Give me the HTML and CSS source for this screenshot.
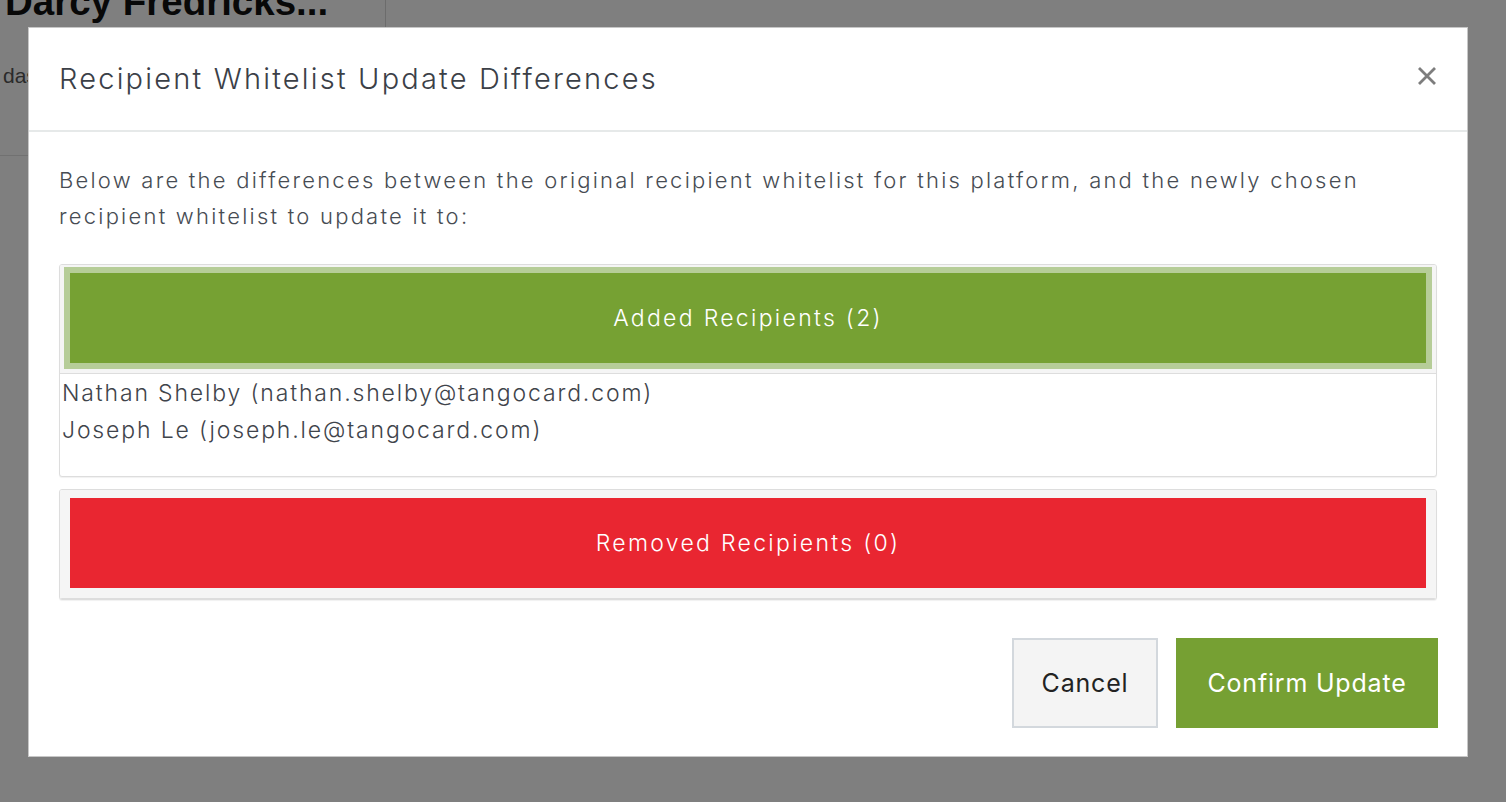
FILE: index.html
```html
<!DOCTYPE html>
<html lang="en">
<head>
<meta charset="utf-8">
<title>Recipient Whitelist Update Differences</title>
<link rel="stylesheet" href="styles.css">
</head>
<body>
<div class="page">
  <div class="side-card">
    <h1 class="side-title">Darcy Fredricks...</h1>
    <p class="side-text">dashboard</p>
  </div>
</div>
<div class="overlay"></div>
<div class="modal" role="dialog">
  <div class="modal-header">
    <h2 class="modal-title">Recipient Whitelist Update Differences</h2>
    <button class="close" aria-label="Close">
      <svg width="20" height="20" viewBox="0 0 20 20"><path d="M2 2 L18 18 M18 2 L2 18" stroke="#7d7d7d" stroke-width="2.8" fill="none"/></svg>
    </button>
  </div>
  <div class="modal-body">
    <p class="intro">Below are the differences between the original recipient whitelist for this platform, and the newly chosen recipient whitelist to update it to:</p>
    <div class="panel">
      <div class="panel-heading">
        <button class="toggle toggle-added">Added Recipients (2)</button>
      </div>
      <div class="panel-body">
        <div class="recipient">Nathan Shelby (nathan.shelby@tangocard.com)</div>
        <div class="recipient">Joseph Le (joseph.le@tangocard.com)</div>
      </div>
    </div>
    <div class="panel panel-last">
      <div class="panel-heading">
        <button class="toggle toggle-removed">Removed Recipients (0)</button>
      </div>
    </div>
  </div>
  <div class="modal-footer">
    <button class="btn btn-cancel">Cancel</button>
    <button class="btn btn-confirm">Confirm Update</button>
  </div>
</div>
</body>
</html>
```

FILE: styles.css
```css
html, body {
  margin: 0;
  padding: 0;
  height: 100%;
  overflow: hidden;
}
body {
  background: #ffffff;
  font-family: Inter, "Open Sans", "Liberation Sans", sans-serif;
}
.page {
  display: flex;
}
.side-card {
  width: 386px;
  height: 156px;
  border-right: 1px solid #d9d9d9;
  border-bottom: 1px solid #e2e2e2;
  box-sizing: border-box;
  overflow: hidden;
}
.side-title {
  margin: -19px 0 0 5px;
  font-family: "Liberation Sans", Arial, sans-serif;
  font-weight: bold;
  font-size: 38.5px;
  line-height: 42px;
  white-space: nowrap;
  color: #111;
}
.side-text {
  margin: 41px 0 0 3px;
  font-family: "Liberation Sans", Arial, sans-serif;
  font-size: 21px;
  line-height: 24px;
  color: #555;
}
.overlay {
  position: fixed;
  inset: 0;
  background: rgba(0, 0, 0, 0.5);
}
.modal {
  position: fixed;
  left: 28px;
  top: 27px;
  width: 1440px;
  height: 730px;
  box-sizing: border-box;
  background: #fff;
  border: 1px solid rgba(0, 0, 0, 0.22);
  display: flex;
  flex-direction: column;
}
.modal-header {
  height: 104px;
  box-sizing: border-box;
  border-bottom: 2px solid #e6e9e9;
  display: flex;
  align-items: center;
  justify-content: space-between;
  padding: 0 30px 2px 30px;
}
.modal-title {
  margin: 0;
  font-weight: 300;
  font-size: 29px;
  letter-spacing: 2.2px;
  color: #3b4047;
}
.close {
  border: 0;
  background: none;
  padding: 0;
  margin: 0 0 4px 0;
  width: 20px;
  height: 20px;
  display: flex;
}
.modal-body {
  padding: 30px 30px 0 30px;
}
.intro {
  margin: 0 0 30px 0;
  font-weight: 300;
  font-size: 22px;
  line-height: 36px;
  letter-spacing: 2.23px;
  color: #474c53;
}
.panel {
  border: 1px solid #dddddd;
  border-radius: 3px;
  background: #fff;
  box-shadow: 0 1px 1px rgba(0, 0, 0, 0.06);
  margin-bottom: 12px;
  overflow: hidden;
}
.panel-heading {
  background: #f5f5f5;
  padding: 8px 10px 10px 10px;
  border-bottom: 1px solid #dddddd;
}
.toggle {
  display: block;
  width: 100%;
  height: 90px;
  border: 0;
  color: #fff;
  font-family: Inter, "Open Sans", "Liberation Sans", sans-serif;
  font-weight: 300;
  font-size: 23px;
  letter-spacing: 2.3px;
}
.toggle-added {
  background: #76a133;
  box-shadow: 0 0 0 6px #b6cd98;
}
.toggle-removed {
  background: #e92631;
}
.panel-body {
  padding: 1px 2px 27px 2px;
}
.recipient {
  font-weight: 300;
  font-size: 23px;
  line-height: 37px;
  letter-spacing: 1.85px;
  color: #3f444b;
}
.panel-last {
  margin-bottom: 13px;
}
.modal-footer {
  display: flex;
  justify-content: flex-end;
  gap: 18px;
  padding: 25px 29px 0 0;
}
.btn {
  height: 90px;
  font-family: Inter, "Open Sans", "Liberation Sans", sans-serif;
  font-size: 25px;
  font-weight: 400;
  letter-spacing: 0.8px;
  box-sizing: border-box;
}
.btn-cancel {
  width: 146px;
  background: #f4f4f4;
  border: 2px solid #d3d8dd;
  color: #222;
}
.btn-confirm {
  width: 262px;
  background: #76a033;
  border: 0;
  color: #fff;
}
```
